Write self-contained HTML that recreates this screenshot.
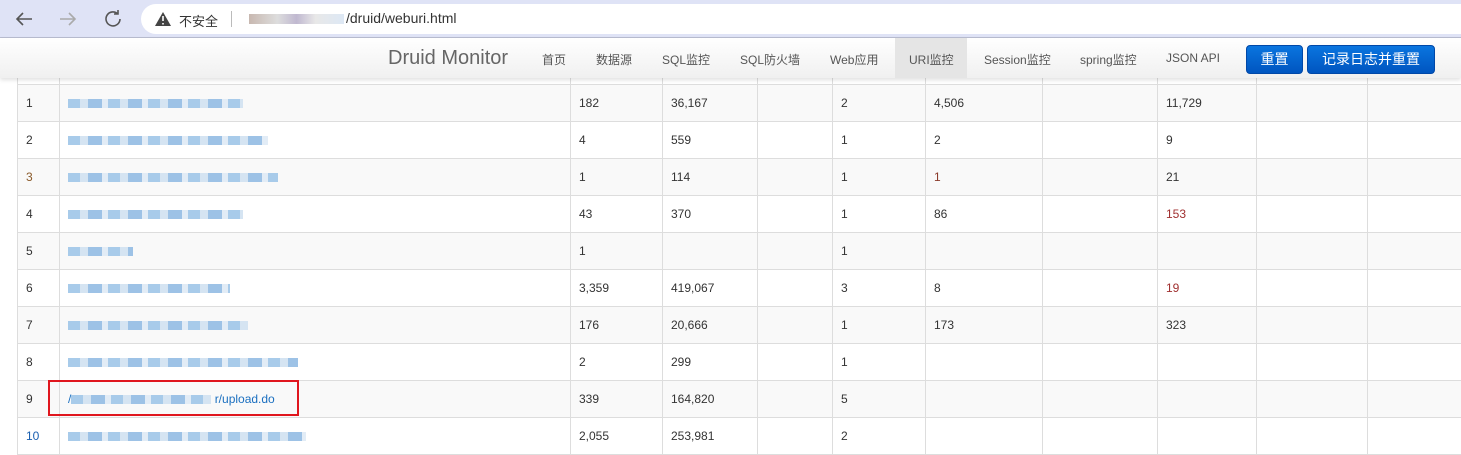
<!DOCTYPE html>
<html><head><meta charset="utf-8"><style>
*{margin:0;padding:0;box-sizing:border-box}
body{width:1461px;height:453px;overflow:hidden;background:#fff;font-family:"Liberation Sans","Noto Sans CJK SC",sans-serif;font-size:12px;color:#333;position:relative}
.top{position:absolute;left:0;top:0;width:1461px;height:38px;background:#dfe3f6;border-bottom:1px solid #b9bdd0}
.addr{position:absolute;left:141px;top:4px;width:1340px;height:30px;background:#fff;border-radius:15px}
.nav{position:absolute;left:0;top:38px;width:1461px;height:40px;background:linear-gradient(#fff,#f0f0f0);box-shadow:0 2px 4px rgba(0,0,0,.12);z-index:5}
.nav span{position:absolute;top:13px;font-size:12px;color:#555}
.btn{position:absolute;top:7px;height:29px;background:linear-gradient(#0a75df,#0055c0);border:1px solid #0048a8;border-radius:4px;color:#fff;font-size:14px;text-align:center;line-height:27px}
table{position:absolute;left:17px;top:47px;border-collapse:collapse;width:1460px}
td{border:1px solid #ddd;height:37px;padding-left:8px;font-size:12px;color:#333}
tr:nth-child(even) td{background:#f9f9f9}
.b{display:inline-block;height:9px;vertical-align:middle;background:repeating-linear-gradient(90deg,#a8cbea 0 12px,#d5e4f2 12px 20px,#9dc2e6 20px 34px,#e2ecf6 34px 40px)}
</style></head><body>
<div class="top">
<svg style="position:absolute;left:14px;top:10px" width="20" height="18"><path d="M18 9H3M9 3L3 9l6 6" stroke="#555" stroke-width="1.6" fill="none"/></svg>
<svg style="position:absolute;left:58px;top:10px" width="20" height="18"><path d="M2 9h15M11 3l6 6-6 6" stroke="#aaa" stroke-width="1.6" fill="none"/></svg>
<svg style="position:absolute;left:103px;top:9px" width="20" height="20"><path d="M15 5A7 7 0 1 0 17 10M15 1v4h-4" stroke="#555" stroke-width="1.6" fill="none"/></svg>
<div class="addr">
<svg style="position:absolute;left:14px;top:8px" width="16" height="14"><path d="M8 0L16 14H0z" fill="#444"/><path d="M8 4v5M8 11v1.5" stroke="#fff" stroke-width="1.6"/></svg>
<span style="position:absolute;left:38px;top:7px;font-size:13px;color:#333">不安全</span>
<span style="position:absolute;left:90px;top:7px;width:1px;height:16px;background:#bbb"></span>
<span style="position:absolute;left:108px;top:10px;width:95px;height:10px;background:linear-gradient(90deg,#c8b8b0,#ddd 30%,#c0b8d0 50%,#e8e8e8 70%,#dde8f5)"></span>
<span style="position:absolute;left:205px;top:6px;font-size:14px;color:#333">/druid/weburi.html</span>
</div>
</div>
<div class="nav">
<span style="left:388px;top:9px;font-size:20px;color:#666">Druid Monitor</span>
<span style="left:542px">首页</span><span style="left:596px">数据源</span><span style="left:662px">SQL监控</span><span style="left:740px">SQL防火墙</span><span style="left:830px">Web应用</span>
<div style="position:absolute;left:895px;top:0;width:72px;height:40px;background:#e5e5e5"></div>
<span style="left:909px">URI监控</span><span style="left:984px">Session监控</span><span style="left:1080px">spring监控</span><span style="left:1166px">JSON API</span>
<div class="btn" style="left:1246px;width:57px">重置</div>
<div class="btn" style="left:1307px;width:128px">记录日志并重置</div>
</div>
<table>
<colgroup><col style="width:42px"><col style="width:511px"><col style="width:92px"><col style="width:95px"><col style="width:75px"><col style="width:93px"><col style="width:117px"><col style="width:115px"><col style="width:99px"><col style="width:111px"><col></colgroup>
<tr><td style="height:37px"></td><td></td><td></td><td></td><td></td><td></td><td></td><td></td><td></td><td></td><td></td></tr>
<tr><td>1</td><td><span class="b" style="width:175px"></span></td><td>182</td><td>36,167</td><td></td><td>2</td><td>4,506</td><td></td><td>11,729</td><td></td><td></td></tr>
<tr><td>2</td><td><span class="b" style="width:200px"></span></td><td>4</td><td>559</td><td></td><td>1</td><td>2</td><td></td><td>9</td><td></td><td></td></tr>
<tr><td style="color:#8a5a2a">3</td><td><span class="b" style="width:210px"></span></td><td>1</td><td>114</td><td></td><td>1</td><td style="color:#8a3a2a">1</td><td></td><td>21</td><td></td><td></td></tr>
<tr><td>4</td><td><span class="b" style="width:175px"></span></td><td>43</td><td>370</td><td></td><td>1</td><td>86</td><td></td><td style="color:#a03030">153</td><td></td><td></td></tr>
<tr><td>5</td><td><span class="b" style="width:65px"></span></td><td>1</td><td></td><td></td><td>1</td><td></td><td></td><td></td><td></td><td></td></tr>
<tr><td>6</td><td><span class="b" style="width:162px"></span></td><td>3,359</td><td>419,067</td><td></td><td>3</td><td>8</td><td></td><td style="color:#a03030">19</td><td></td><td></td></tr>
<tr><td>7</td><td><span class="b" style="width:180px"></span></td><td>176</td><td>20,666</td><td></td><td>1</td><td>173</td><td></td><td>323</td><td></td><td></td></tr>
<tr><td>8</td><td><span class="b" style="width:230px"></span></td><td>2</td><td>299</td><td></td><td>1</td><td></td><td></td><td></td><td></td><td></td></tr>
<tr><td>9</td><td><span style="color:#1a6fc0">/</span><span class="b" style="width:140px"></span> <span style="color:#1a6fc0">r/upload.do</span></td><td>339</td><td>164,820</td><td></td><td>5</td><td></td><td></td><td></td><td></td><td></td></tr>
<tr><td style="color:#1a5fb0">10</td><td><span class="b" style="width:238px"></span></td><td>2,055</td><td>253,981</td><td></td><td>2</td><td></td><td></td><td></td><td></td><td></td></tr>
</table>
<div style="position:absolute;left:48px;top:380px;width:251px;height:36px;border:2px solid #e0161e"></div>
</body></html>
